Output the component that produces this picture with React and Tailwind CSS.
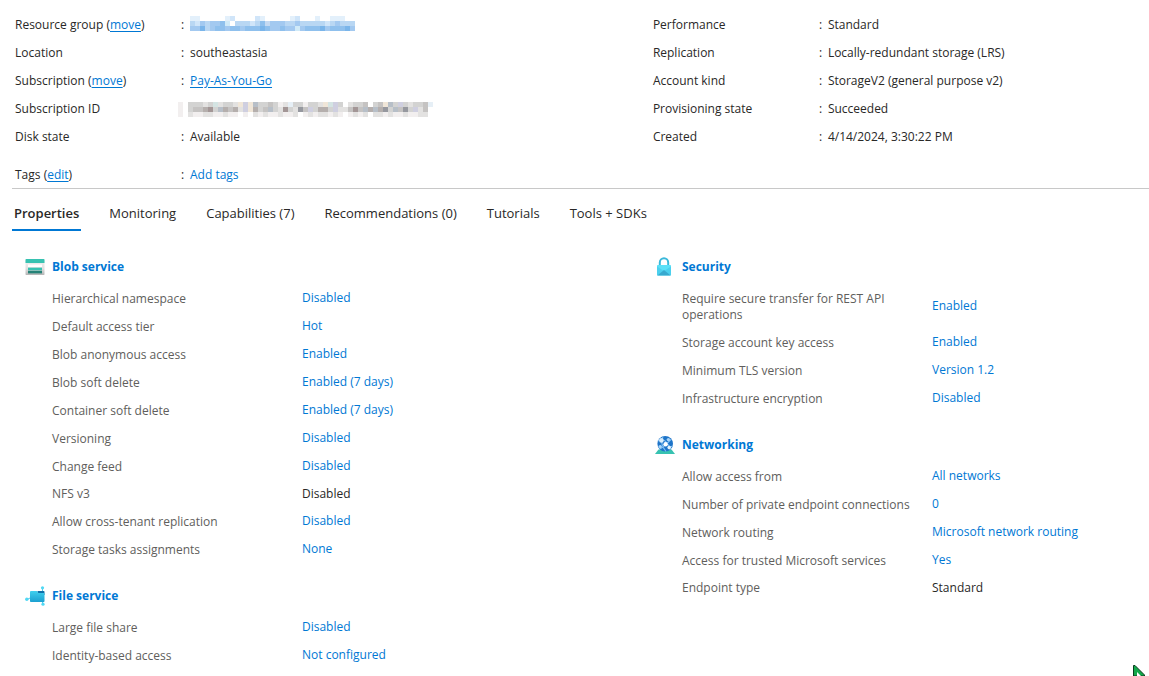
import React, { useState } from 'react';

const linkGroupCells = [
  'aa.....ab....ba.....ab...a..aaa..',
  'cbdcddeg.cccbcehdddccdcccccbcdccc',
  'ddfcdeedeedeeefeddeddgdeeefdeeefd',
];

const idCells = [
  'a.cccbcmbccbjkjgccdcabfccaccbjmkc.bccd.cdjgckcbccdf',
  'a.cddehcgedebkjecdgcbhcbidkceeckbbdhdgegeicgdickbd.',
  'a.baabbaabaa.a.babaabaab.ababbaba.abab.bbabaabaabb.',
];

const bluePalette = {
  a: '#e3f0fb',
  b: '#d0e5f9',
  c: '#b9d7f3',
  d: '#a3c9f0',
  e: '#8fc0ed',
  f: '#7ab5ea',
  g: '#d0eaf8',
  h: '#c5daf2',
};

const grayPalette = {
  a: '#f2efef',
  b: '#e3e2e1',
  c: '#d3d3d2',
  d: '#c5c3c2',
  e: '#b5afad',
  f: '#e6eff6',
  g: '#b7bfc8',
  h: '#a39696',
  i: '#96989f',
  j: '#f0e6d8',
  k: '#cfcfe0',
  m: '#d4e4e3',
};

const overviewLeft = [
  { label: 'Resource group', action: 'move', kind: 'group' },
  { label: 'Location', value: 'southeastasia' },
  { label: 'Subscription', action: 'move', value: 'Pay-As-You-Go', kind: 'link' },
  { label: 'Subscription ID', kind: 'id' },
  { label: 'Disk state', value: 'Available' },
];

const overviewRight = [
  { label: 'Performance', value: 'Standard' },
  { label: 'Replication', value: 'Locally-redundant storage (LRS)' },
  { label: 'Account kind', value: 'StorageV2 (general purpose v2)' },
  { label: 'Provisioning state', value: 'Succeeded' },
  { label: 'Created', value: '4/14/2024, 3:30:22 PM' },
];

const tabs = ['Properties', 'Monitoring', 'Capabilities (7)', 'Recommendations (0)', 'Tutorials', 'Tools + SDKs'];

const blobRows = [
  { label: 'Hierarchical namespace', value: 'Disabled' },
  { label: 'Default access tier', value: 'Hot' },
  { label: 'Blob anonymous access', value: 'Enabled' },
  { label: 'Blob soft delete', value: 'Enabled (7 days)' },
  { label: 'Container soft delete', value: 'Enabled (7 days)' },
  { label: 'Versioning', value: 'Disabled' },
  { label: 'Change feed', value: 'Disabled' },
  { label: 'NFS v3', value: 'Disabled', readOnly: true },
  { label: 'Allow cross-tenant replication', value: 'Disabled' },
  { label: 'Storage tasks assignments', value: 'None' },
];

const fileRows = [
  { label: 'Large file share', value: 'Disabled' },
  { label: 'Identity-based access', value: 'Not configured' },
];

const securityRows = [
  { label: 'Require secure transfer for REST API operations', value: 'Enabled' },
  { label: 'Storage account key access', value: 'Enabled' },
  { label: 'Minimum TLS version', value: 'Version 1.2' },
  { label: 'Infrastructure encryption', value: 'Disabled' },
];

const networkRows = [
  { label: 'Allow access from', value: 'All networks' },
  { label: 'Number of private endpoint connections', value: '0' },
  { label: 'Network routing', value: 'Microsoft network routing' },
  { label: 'Access for trusted Microsoft services', value: 'Yes' },
  { label: 'Endpoint type', value: 'Standard', readOnly: true },
];

// Pixelated block for values that are hidden
const Mosaic = ({ cells, palette, label }) => (
  <svg
    role="img"
    aria-label={label}
    width={cells[0].length * 5}
    height={cells.length * 5}
    shapeRendering="crispEdges"
  >
    {cells.map((row, y) =>
      row.split('').map((cell, x) =>
        palette[cell] ? (
          <rect key={`${x}-${y}`} x={x * 5} y={y * 5} width="5" height="5" fill={palette[cell]} />
        ) : null
      )
    )}
  </svg>
);

const BlobIcon = () => (
  <svg width="20" height="20" viewBox="0 0 20 20" aria-hidden="true">
    <defs>
      <linearGradient id="blobBody" x1="0" y1="0" x2="0" y2="1">
        <stop offset="0" stopColor="#f4f4f4" />
        <stop offset="0.6" stopColor="#e0e0e0" />
        <stop offset="1" stopColor="#b5b5b5" />
      </linearGradient>
    </defs>
    <rect x="0.5" y="2" width="19" height="16" rx="0.8" fill="url(#blobBody)" />
    <path d="M0.5 6V2.8a.8.8 0 0 1 .8-.8h17.4a.8.8 0 0 1 .8.8V6z" fill="#37c2b1" />
    <rect x="3" y="7.5" width="14" height="2.5" fill="#ffffff" />
    <rect x="3" y="10.7" width="14" height="2.6" fill="#37c2b1" />
    <rect x="3" y="13.8" width="14" height="2.6" fill="#258277" />
  </svg>
);

const FileIcon = () => (
  <svg width="20" height="20" viewBox="0 0 20 20" aria-hidden="true">
    <defs>
      <linearGradient id="fileBody" x1="0" y1="0" x2="0" y2="1">
        <stop offset="0" stopColor="#3fd0ee" />
        <stop offset="1" stopColor="#1b9fd0" />
      </linearGradient>
    </defs>
    <path d="M2 13.5L5 12M17.5 2v3.5M17.5 15v3" stroke="#50c8ea" strokeWidth="1" fill="none" />
    <path d="M12.5 5h6.2a.8.8 0 0 1 .8.8V9h-7z" fill="#0f6fa8" />
    <path d="M5 6.2c0-.7.5-1.2 1.2-1.2h5.6l1.6 1.9h5.1c.7 0 1 .4 1 1v7.2c0 .6-.4 1-1 1H6.2c-.7 0-1.2-.5-1.2-1.2z" fill="url(#fileBody)" />
    <circle cx="1.8" cy="13.3" r="1.7" fill="#50d8f4" />
    <circle cx="17.5" cy="1.8" r="1.6" fill="#50d8f4" />
    <circle cx="18" cy="18.2" r="1.6" fill="#50d8f4" />
  </svg>
);

const SecurityIcon = () => (
  <svg width="20" height="20" viewBox="0 0 20 20" aria-hidden="true">
    <path d="M4.8 9V5.4a4.2 4.2 0 0 1 8.4 0V9" stroke="#3ab8da" strokeWidth="2" fill="none" />
    <rect x="2" y="8" width="14" height="10.5" rx="0.8" fill="#5be0f7" />
    <path d="M2 9.5L9 14 2 18.5z" fill="#4bd0ee" />
    <path d="M16 9.5L9 14l7 4.5z" fill="#4bd0ee" />
    <path d="M2.3 18.5L9 13l6.7 5.5z" fill="#37a9cf" />
  </svg>
);

const NetworkIcon = () => (
  <svg width="20" height="20" viewBox="0 0 20 20" aria-hidden="true">
    <path d="M0 19l3.5-4.5h13L20 19z" fill="#37c2b1" />
    <circle cx="10.2" cy="8.8" r="7.8" fill="#1e74c8" />
    <path d="M3 6C6 3 10 5 11.5 7.5S15 13 17.5 11M4.5 14C7 13.5 11 9.5 16 4.5M8 1.5c-2 4-2 9 3 15" stroke="#7dbdf3" strokeWidth="1.1" fill="none" />
    <circle cx="6.4" cy="5.4" r="2.3" fill="#d8edfc" />
    <circle cx="13.4" cy="4.6" r="1.7" fill="#a9d5f8" />
    <circle cx="10.6" cy="9.2" r="2.2" fill="#ffffff" />
    <circle cx="5.2" cy="11.6" r="1.7" fill="#a9d5f8" />
    <circle cx="14.2" cy="12.6" r="1.8" fill="#e4f3fd" />
  </svg>
);

const OverviewValue = ({ item }) => {
  if (item.kind === 'group') {
    return (
      <a href="#group">
        <Mosaic cells={linkGroupCells} palette={bluePalette} label="Hidden resource group" />
      </a>
    );
  }
  if (item.kind === 'link') {
    return (
      <a href="#subscription" className="text-[#0078d4] underline underline-offset-2">
        {item.value}
      </a>
    );
  }
  return item.value;
};

const OverviewRow = ({ item }) => (
  <div className="flex h-7 items-center">
    <dt className={item.kind === 'id' ? 'w-[163px]' : 'w-[166px]'}>
      {item.label}
      {item.action && (
        <>
          {' '}(
          <a href={`#${item.action}`} className="text-[#0078d4] underline underline-offset-2">
            {item.action}
          </a>
          )
        </>
      )}
    </dt>
    {item.kind === 'id' ? (
      <dd className="pt-[2px]">
        <Mosaic cells={idCells} palette={grayPalette} label="Hidden subscription ID" />
      </dd>
    ) : (
      <dd className="flex">
        <span className="w-[9px]">:</span>
        <OverviewValue item={item} />
      </dd>
    )}
  </div>
);

const Section = ({ title, icon, rows }) => (
  <section>
    <h3 className="flex h-9 items-center gap-[7px] font-bold text-[#0078d4]">
      <span className="pt-[2px]">{icon}</span>
      <a href="#section">{title}</a>
    </h3>
    <dl className="pl-[27px] text-[#605e5c]">
      {rows.map((row) => (
        <div key={row.label} className={`flex items-center ${row.readOnly ? 'py-[5px]' : 'pt-[7px] pb-[5px]'}`}>
          <dt className="w-[250px] shrink-0 pr-4 leading-4">{row.label}</dt>
          {row.readOnly ? (
            <dd className="leading-[17px] text-[#292827]">{row.value}</dd>
          ) : (
            <dd className="pb-[2px] leading-[14px]">
              <a href="#setting" className="text-[#0078d4]">{row.value}</a>
            </dd>
          )}
        </div>
      ))}
    </dl>
  </section>
);

const App = () => {
  const [activeTab, setActiveTab] = useState('Properties');

  return (
    <div className="overflow-hidden bg-white pt-[10px] pl-3 font-['Open_Sans',sans-serif] text-[12px] leading-[17px] text-[#292827]">
      <div className="border-b border-[#c8c8c8] pl-[3px]">
        <div className="grid grid-cols-[9fr_7fr]">
          <dl>
            {overviewLeft.map((item) => (
              <OverviewRow key={item.label} item={item} />
            ))}
          </dl>
          <dl>
            {overviewRight.map((item) => (
              <OverviewRow key={item.label} item={item} />
            ))}
          </dl>
        </div>
        <div className="mt-[10px] flex h-7 items-center">
          <span className="w-[166px]">
            Tags (<a href="#edit" className="text-[#0078d4] underline underline-offset-2">edit</a>)
          </span>
          <span className="w-[9px]">:</span>
          <a href="#tags" className="text-[#0078d4]">Add tags</a>
        </div>
      </div>

      <div role="tablist" className="flex gap-[26px] text-[13px]">
        {tabs.map((tab) => (
          <button
            key={tab}
            type="button"
            role="tab"
            aria-selected={activeTab === tab}
            onClick={() => setActiveTab(tab)}
            className={`h-[42px] border-b-2 px-[2px] pt-2 ${
              activeTab === tab ? 'border-[#0078d4] font-semibold' : 'border-transparent'
            }`}
          >
            {tab}
          </button>
        ))}
      </div>

      <div className="grid grid-cols-[9fr_7fr] pt-[17px] pr-1 pl-[13px]">
        <div className="flex flex-col gap-[14px]">
          <Section title="Blob service" icon={<BlobIcon />} rows={blobRows} />
          <Section title="File service" icon={<FileIcon />} rows={fileRows} />
        </div>
        <div className="flex flex-col gap-[14px]">
          <Section title="Security" icon={<SecurityIcon />} rows={securityRows} />
          <Section title="Networking" icon={<NetworkIcon />} rows={networkRows} />
        </div>
      </div>

      {/* mouse pointer */}
      <svg width="12" height="11" viewBox="0 0 12 11" aria-hidden="true" className="fixed right-1 bottom-0">
        <path d="M0.5 11V0.5h1.5L11.5 10v1z" fill="#12a84a" stroke="#0a3d1e" strokeWidth="1" />
        <path d="M4 11V7l4 4z" fill="#ffffff" />
      </svg>
    </div>
  );
};

export default App;
